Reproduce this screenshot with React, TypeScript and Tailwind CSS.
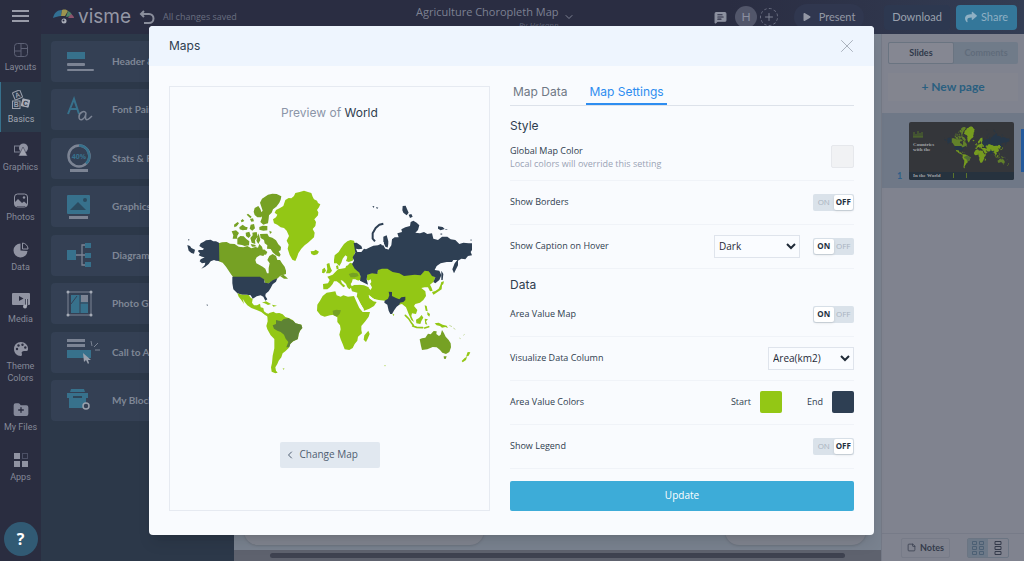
import { useState } from 'react'
import type { ReactNode } from 'react'
import {
  ChevronDown,
  ChevronLeft,
  Folder,
  MessageSquareText,
  Plus,
  StickyNote,
  X,
} from 'lucide-react'
import { FaPlay, FaShare } from 'react-icons/fa'

interface NavItem {
  label: string
  icon: ReactNode
  active?: boolean
  tall?: boolean
}

interface BlockItem {
  label: string
  icon: ReactNode
}

const navItems: NavItem[] = [
  {
    label: 'Layouts',
    icon: (
      <svg className="size-4" viewBox="0 0 16 16" fill="none" stroke="#5d6175">
        <rect x="1.5" y="1.5" width="13" height="13" rx="3" />
        <path d="M8 1.5v13M1.5 9H8M8 6.5h6.5" />
      </svg>
    ),
  },
  {
    label: 'Basics',
    active: true,
    icon: (
      <svg className="size-5" viewBox="0 0 20 20">
        <g fontFamily="Liberation Sans" fontSize="7" fontWeight="bold" textAnchor="middle">
          <g transform="rotate(-22 6.5 5)">
            <rect x="2.5" y="1" width="8" height="8" rx="1" fill="none" stroke="#9a9fac" />
            <text x="6.5" y="7.6" fill="#9a9fac">A</text>
          </g>
          <rect x="1.5" y="11" width="7.5" height="7.5" fill="none" stroke="#9a9fac" />
          <text x="5.2" y="17.4" fill="#9a9fac">B</text>
          <g transform="rotate(14 14.5 13)">
            <rect x="10.5" y="9" width="8" height="8" rx="1" fill="#a9adb8" />
            <text x="14.5" y="15.6" fill="#2c3849">C</text>
          </g>
        </g>
      </svg>
    ),
  },
  {
    label: 'Graphics',
    icon: (
      <svg className="size-4" viewBox="0 0 16 16">
        <rect x="1.5" y="4" width="7" height="6" fill="none" stroke="#7d8191" />
        <circle cx="10.5" cy="6" r="4.5" fill="#8f92a1" />
        <path d="M10 5l4.500 9H5.500z" fill="#a1a4b0" stroke="#2a2d40" strokeWidth=".5" />
      </svg>
    ),
  },
  {
    label: 'Photos',
    icon: (
      <svg className="size-4" viewBox="0 0 16 16">
        <rect x="1.500" y="2" width="13" height="13" rx="3" fill="none" stroke="#9093a2" />
        <path d="M2 10l3-3 4 4 2-1.500 3 2.500v2H2z" fill="#9093a2" />
        <circle cx="11" cy="5.500" r="1.200" fill="#9093a2" />
      </svg>
    ),
  },
  {
    label: 'Data',
    icon: (
      <svg className="size-4" viewBox="0 0 16 16">
        <path d="M7.500 1.500A7 7 0 1 0 14.500 9L7.500 8.500z" fill="#9093a2" />
        <path d="M9.500 1a6 6 0 0 1 5.500 6H9.500z" fill="none" stroke="#9093a2" />
      </svg>
    ),
  },
  {
    label: 'Media',
    icon: (
      <svg className="size-5" viewBox="0 0 20 20">
        <rect x="1" y="3" width="18" height="12" rx="1" fill="#9093a2" />
        <path d="M8 6v5l4.500-2.500z" fill="#2a2d40" />
        <path d="M15.500 9v7" stroke="#2a2d40" strokeWidth="3" />
        <path d="M15.500 9v7" stroke="#a6a9b5" strokeWidth="1.500" />
        <circle cx="14" cy="16.500" r="2" fill="#a6a9b5" />
      </svg>
    ),
  },
  {
    label: 'Theme Colors',
    tall: true,
    icon: (
      <svg className="size-4" viewBox="0 0 16 16">
        <path d="M8 1C3.800 1 1 4 1 8s3 7 6.500 7c2 0 1.500-2 1.200-3s.8-2 2.300-2h2.500C15 10 15 8.500 15 7.500 15 4 12 1 8 1z" fill="#9093a2" />
        <g fill="#2a2d40">
          <circle cx="4" cy="8" r="1.200" />
          <circle cx="5.500" cy="4.500" r="1.200" />
          <circle cx="9.500" cy="3.800" r="1.200" />
          <circle cx="12.300" cy="6.500" r="1.200" />
        </g>
      </svg>
    ),
  },
  {
    label: 'My Files',
    icon: (
      <span className="relative block size-4">
        <Folder className="size-4 fill-[#85899a] text-[#85899a]" />
        <Plus className="absolute top-1 left-1 size-2 text-[#2a2d40]" strokeWidth={4} />
      </span>
    ),
  },
  {
    label: 'Apps',
    icon: (
      <svg className="size-4" viewBox="0 0 16 16" fill="#9093a2">
        <rect x="1" y="1" width="6" height="6" />
        <rect x="1" y="9" width="6" height="6" />
        <rect x="9" y="9" width="6" height="6" />
        <rect x="9.500" y="1.500" width="5" height="5" fill="none" stroke="#4c5065" />
      </svg>
    ),
  },
]

const blockItems: BlockItem[] = [
  {
    label: 'Header & Text',
    icon: (
      <>
        <rect x="2" y="4" width="18" height="7" fill="#37718c" />
        <rect x="2" y="15" width="18" height="3" rx="1" fill="#7c8494" />
        <rect x="2" y="21" width="27" height="2" rx="1" fill="#7c8494" />
      </>
    ),
  },
  {
    label: 'Font Pairs',
    icon: (
      <>
        <path d="M3 18L9 3l5 15M5 13h7" fill="none" stroke="#37718c" strokeWidth="2" />
        <path d="M21 17c-1-3-7-1-7 4 0 5 6 3 7-4-1 6-1 10 6 3" fill="none" stroke="#7c8494" strokeWidth="1.500" />
      </>
    ),
  },
  {
    label: 'Stats & Figures',
    icon: (
      <>
        <circle cx="14" cy="12" r="10.500" fill="none" stroke="#7c8494" strokeWidth="2.500" />
        <path d="M14 1.500a10.500 10.500 0 0 1 7 18" fill="none" stroke="#37718c" strokeWidth="2.500" />
        <text x="14" y="14.500" fontSize="7" textAnchor="middle" fill="#37718c" fontFamily="Open Sans">40%</text>
        <rect x="5" y="25" width="18" height="3" fill="#7c8494" />
      </>
    ),
  },
  {
    label: 'Graphics',
    icon: (
      <>
        <rect x="2" y="2" width="23" height="19" rx="1" fill="#37718c" />
        <path d="M5 17l8-8 8 8z" fill="#2c4b60" />
        <circle cx="20" cy="7" r="2" fill="#2c4b60" />
        <rect x="4" y="23" width="19" height="3" fill="#7c8494" />
      </>
    ),
  },
  {
    label: 'Diagrams',
    icon: (
      <>
        <path d="M10 14h13M22 4h-5v20h5" fill="none" stroke="#7c8494" strokeWidth="1.300" />
        <g fill="#37718c">
          <rect x="2" y="9" width="9" height="10" />
          <rect x="20" y="2" width="6" height="5" />
          <rect x="20" y="12" width="6" height="5" />
          <rect x="20" y="21" width="6" height="5" />
        </g>
      </>
    ),
  },
  {
    label: 'Photo Grids',
    icon: (
      <>
        <rect x="3" y="2" width="23" height="23" fill="none" stroke="#7c8494" />
        <rect x="6" y="5" width="17" height="18" fill="#37718c" />
        <rect x="16" y="5" width="7" height="7" fill="#7c8494" />
        <path d="M15 5v18M6 14l6-8M15 13h8" stroke="#344054" />
        <g fill="#a5abb6">
          <circle cx="3" cy="2" r="1.500" />
          <circle cx="26" cy="2" r="1.500" />
          <circle cx="3" cy="25" r="1.500" />
          <circle cx="26" cy="25" r="1.500" />
        </g>
      </>
    ),
  },
  {
    label: 'Call to Action',
    icon: (
      <>
        <rect x="2" y="1" width="18" height="3" fill="#7c8494" />
        <rect x="2" y="6" width="18" height="3" fill="#7c8494" />
        <rect x="2" y="12" width="24" height="8" fill="#37718c" />
        <path d="M18 15l1 9 2-2 2 4 1-1-1-3h3z" fill="#9aa1ad" />
        <path d="M27 8l-1-5M29 9l4-4M30 12h5" stroke="#7c8494" />
      </>
    ),
  },
  {
    label: 'My Blocks',
    icon: (
      <>
        <path d="M6 3h13l1 3H5zM2 7h21v5H2zM4 12h17v10H4z" fill="#37718c" />
        <path d="M8 11h9" stroke="#2c3849" strokeWidth="1.500" />
        <circle cx="21" cy="20" r="3" fill="#344054" stroke="#9aa1ad" strokeWidth="1.500" />
      </>
    ),
  },
]

function WorldMap({ className, dark, sea }: { className: string; dark: string; sea: string }) {
  return (
    <svg className={className} viewBox="18 30 864 558" role="img" aria-label="World map">
      {/* Canada */}
      <g fill="#76a124">
        <path d="M116 190L126 187 140 186 150 191 164 192 176 200 190 202 202 198 214 205 226 201 234 203 238 192 246 200 250 214 256 220 250 228 240 226 230 232 226 240 229 250 240 256 248 260 256 266 261 280 266 280 266 264 269 250 262 240 268 228 278 222 288 228 292 240 300 240 306 250 314 260 318 272 318 282 300 288 294 294 284 300 276 304 266 310 256 310 252 300 240 292 160 292 154 284 146 272 138 260 128 248 116 244z" />
        <path d="M240 68L246 56 254 51 264 44 277 41 290 42 304 49 302 59 298 68 289 80 279 88 275 98 267 106 266 116 264 130 256 132 250 134 241 126 246 113 240 102 248 92 244 80zM224 84L235 78 241 87 245 98 243 112 232 112 224 105 221 95z" />
        <path d="M238 141L248 137 262 138 262 151 250 152 238 149zM240 162L262 161 267 170 277 173 288 181 295 193 303 201 302 211 296 214 302 224 298 230 288 226 278 217 272 207 261 206 262 196 254 190 252 180 242 174zM172 175L181 168 191 169 199 177 208 184 207 196 194 198 186 195 172 193zM155 154L168 151 177 159 172 167 171 176 158 176 160 166zM162 134L173 126 177 130 170 139 163 142zM178 142L188 134 196 140 203 142 201 149 188 151 179 148zM182 122L188 117 193 123 185 127zM200 104L204 101 215 110 211 115zM210 117L219 115 222 124 214 125zM212 134L222 132 225 145 217 152 209 146zM197 158L208 155 212 167 206 174 198 168zM217 158L230 156 233 170 225 181 226 192 215 188 211 174 218 166zM236 160L241 180 235 192 229 182zM244 213L252 208 262 216 258 224 247 222zM268 152L276 156 270 162zM212 192L224 194 230 199 216 200zM300 288L310 284 318 290 324 296 312 296z" />
      </g>
      {/* United States */}
      <g fill={dark}>
        <path d="M117 188L108 184 100 184 92 179 78 181 70 186 62 190 58 198 66 203 72 206 68 210 56 210 54 214 60 220 56 226 66 230 74 232 62 238 59 244 66 250 76 248 74 256 64 266 76 260 86 252 92 244 102 240 108 242 118 243zM22 195L30 198 34 204 45 209 42 221 34 219 26 212 24 204zM24 177L29 179 26 182zM157 290H240L252 298 254 308 266 310 278 301 292 295 288 305 278 313 272 324 266 334 257 341 256 348 262 358 256 362 250 350 242 346 230 349 218 356 212 346 200 344 186 344 172 340 160 328 157 310zM80 373L84 375 81 378z" />
      </g>
      {/* Americas */}
      <g fill="#93c715">
        <path d="M172 340L186 344 206 345 212 353 218 357 216 368 222 376 231 376 240 371 242 382 250 384 252 394 260 400 270 402 264 410 254 404 244 396 230 390 214 384 202 376 194 366 188 356 192 372 184 360 176 350zM246 368L258 364 273 372 264 375 254 370zM276 374L291 377 280 380z" />
        <path d="M262 408L268 399 280 395 288 400 298 399 308 403 316 411 326 414 338 420 346 430 364 434 367 444 360 452 356 462 354 476 340 484 330 492 326 504 316 514 308 520 304 532 296 542 292 552 286 562 288 572 293 578 286 580 275 575 273 562 276 549 278 527 283 505 283 477 272 466 262 448 259 438 263 424z" />
        <path d="M308 565L314 566 310 569z" />
        <path d="M316 60L326 54 334 55 342 48 346 39 359 36 372 32 384 36 394 39 398 50 402 58 411 62 414 69 421 73 417 82 411 90 415 97 414 106 403 118 408 126 406 138 398 147 404 158 402 172 393 180 384 188 374 196 364 206 355 220 351 232 346 243 337 239 329 225 323 206 326 194 320 182 327 168 320 152 312 144 302 142 292 134 282 130 279 118 288 112 292 104 284 98 288 90 300 84 310 78z" />
        <path d="M392 214L402 213 407 209 417 215 412 223 402 226 394 222z" />
      </g>
      <path d="M288 420L297 422 304 424 311 417 326 414 332 419 340 422 347 430 364 434 367 444 360 452 356 462 353 478 339 484 331 492 328 502 319 502 325 486 317 476 312 464 302 456 292 452 282 446 278 436 288 432z" fill="#5e8334" />
      <g transform="translate(420 0)">
        {/* Europe */}
        <g fill="#93c715">
          <path d="M42 240L44 226 56 216 62 206 72 192 82 184 92 180 102 182 106 196 106 214 102 230 98 242 86 246 76 242 82 230 76 226 68 236 64 248 58 258 50 250 42 250zM20 252L28 249 31 262 36 272 30 280 18 280 22 268zM7 268L14 263 18 272 12 280 6 278zM48 258L54 256 56 266 50 268z" />
          <path d="M9 312L24 310 29 300 22 290 38 284 46 276 54 268 64 266 76 264 80 254 92 248 100 252 106 266 120 278 124 298 114 302 106 298 98 298 96 306 92 312 96 320 88 328 82 322 78 312 68 302 62 300 66 310 76 318 70 322 58 310 50 304 42 304 38 312 30 322 22 328 10 328z" />
          {/* Asia */}
          <path d="M92 320L104 314 118 314 132 316 146 322 152 318 148 306 140 298 142 282 156 278 172 280 174 268 186 264 202 264 218 272 238 276 252 284 284 282 302 284 314 270 326 272 336 286 346 292 340 306 330 314 334 322 338 332 330 334 324 322 314 322 304 324 316 334 318 348 310 360 300 368 286 372 282 378 292 390 288 402 276 400 274 408 282 426 274 420 266 402 258 382 246 372 236 374 206 366 196 362 176 360 160 356 146 346 148 354 160 364 170 366 162 378 148 386 132 392 124 376 110 352 112 338 96 334z" />
        </g>
        {/* Africa, Madagascar and the Pacific islands */}
        <g fill="#93c715">
          <path d="M-9 392L-8 374 0 362 8 348 20 338 34 336 46 334 50 346 62 350 70 346 84 350 102 348 108 362 118 384 128 396 150 396 146 410 136 424 124 438 124 450 126 460 114 470 112 482 104 492 98 504 88 510 74 508 68 492 62 478 58 464 62 448 60 436 52 426 52 412 42 404 30 406 14 410 2 406zM133 466L145 452 149 462 143 476 138 486 131 479z" />
          <path d="M336 336L346 333 356 326 361 316 364 306 372 304 370 312 366 316 365 328 356 334 344 342 340 344zM288 419L297 414 305 405 310 413 304 423 301 432 289 430zM314 416L324 418 318 424 322 434 316 432zM344 430L356 428 368 434 380 437 384 444 376 441 366 443 360 438 350 436zM314 376L320 378 323 394 317 392zM322 396L330 402 328 410 322 404zM443 516L451 517 446 527 438 530zM434 534L441 530 438 540 428 547 425 543zM217 400L223 404 220 408z" />
          <path d="M256 406L266 416 275 430 280 436M278 438L290 442 308 443M314 444L326 440" fill="none" stroke="#93c715" strokeWidth="5" strokeLinecap="round" />
          <path d="M388 436L396 440M400 444L406 448M418 474L422 476M430 466L434 463" fill="none" stroke="#c7dba0" strokeWidth="3" />
          <path d="M193 557H197" stroke="#93c715" strokeWidth="2" />
        </g>
        <path d="M38 392L49 389 63 391 59 402 50 410 40 406zM86 282L98 278 112 280 116 288 104 292 92 292z" fill="#76a124" />
        {/* Australia */}
        <path d="M299 478L306 475 316 473 324 461 332 463 341 453 350 454 349 462 357 468 362 464 366 450 372 460 377 470 386 480 392 490 393 502 388 516 378 522 367 518 360 510 350 502 338 501 322 508 306 510 303 498zM371 529L380 529 377 537 372 536z" fill="#76a124" />
        {/* Russia and India */}
        <g fill={dark}>
          <path d="M101 189L110 188 124 198 127 206 116 208 108 206 112 216 124 216 132 206 138 208 150 202 160 197 174 196 182 192 190 196 196 206 206 208 214 196 216 178 224 172 236 172 232 160 246 156 244 148 256 142 270 138 272 126 280 122 290 128 298 136 294 150 286 158 300 160 312 156 322 162 336 160 340 176 354 180 366 170 382 170 392 178 406 180 418 192 430 188 446 190 456 190 456 210 452 216 456 226 444 228 436 238 424 236 414 242 414 256 408 268 402 280 397 268 404 250 412 240 400 240 396 246 380 246 362 250 350 258 344 270 358 272 364 286 358 300 346 310 340 306 346 292 336 288 326 274 314 272 302 286 284 284 252 288 238 280 218 276 202 266 186 266 174 270 172 282 156 280 142 284 140 298 144 314 132 308 120 302 122 290 118 278 104 266 96 252 102 242 98 232 106 218z" />
          <path d="M190 170L200 166 204 180 207 196 206 204 196 200 190 186zM248 78L257 77 261 87 266 98 260 106 250 98 247 91zM266 104L274 102 278 110 270 114zM157 78L163 79 161 84zM168 81L175 83 171 87zM354 139L368 141 374 147 362 151 354 146zM376 147L384 150 377 150zM362 160L368 162 362 165zM364 272L370 282 368 300 364 300zM452 178L456 180 452 183z" />
          <path d="M190 131L178 134 167 144 158 160 158 176 165 184" fill="none" stroke={dark} strokeWidth="6" strokeLinejoin="round" />
          <path d="M206 335L216 336 216 348 228 354 238 358 244 352 256 350 256 360 250 366 240 368 238 374 230 380 223 390 216 402 211 402 206 392 202 374 193 368 194 362 204 356 208 346z" />
        </g>
        {/* Inland seas */}
        <g fill={sea}>
          <path d="M144 302L152 298 154 306 150 312 156 322 152 330 146 324 148 314zM98 304L108 300 118 304 124 312 112 314 98 314z" />
          <path d="M106 352L112 352 122 372 132 388 128 394 118 376zM146 344L158 354 168 360 164 364 150 356zM82 232L76 248 88 250 84 256 70 260 66 254 72 240z" />
        </g>
        <path d="M190 186L186 196M208 186L204 208" stroke={sea} strokeWidth="4" />
      </g>
    </svg>
  )
}

function Toggle({ label, initial = false }: { label: string; initial?: boolean }) {
  const [on, setOn] = useState(initial)
  return (
    <label className="relative flex h-[17px] w-[41px] cursor-pointer items-center rounded-xs bg-[#dae2ea] p-px text-[8px] font-bold">
      <input
        type="checkbox"
        aria-label={label}
        checked={on}
        onChange={e => setOn(e.target.checked)}
        className="absolute inset-0 opacity-0"
      />
      <span className={`flex h-full flex-1 items-center justify-center rounded-xs ${on ? 'bg-white text-[#23303f] shadow-sm' : 'font-normal text-[#a9b3c0]'}`}>ON</span>
      <span className={`flex h-full flex-1 items-center justify-center rounded-xs ${on ? 'font-normal text-[#a9b3c0]' : 'bg-white text-[#23303f] shadow-sm'}`}>OFF</span>
    </label>
  )
}

function Row({ label, children }: { label: string; children: ReactNode }) {
  return (
    <div className="flex h-11 items-center justify-between border-b border-[#f0f3f8]">
      <span>{label}</span>
      {children}
    </div>
  )
}

function Select({ label, options }: { label: string; options: string[] }) {
  return (
    <select aria-label={label} className="h-[23px] w-[86px] border border-[#dfe4ec] bg-[#fafcff] text-[10px] text-[#1f2a37]">
      {options.map(option => (
        <option key={option}>{option}</option>
      ))}
    </select>
  )
}

function MapsDialog() {
  return (
    <div role="dialog" aria-label="Maps" className="w-[725px] overflow-hidden rounded-sm bg-[#f9fbfe] text-[9px] text-[#2f3d4e] shadow-lg">
      <div className="flex h-10 items-center justify-between bg-[#eef5fe] px-5">
        <h2 className="font-[Inter,sans-serif] text-xs">Maps</h2>
        <button aria-label="Close" className="-mr-1 text-[#a4acb8]">
          <X className="size-[22px]" strokeWidth={1} />
        </button>
      </div>

      <div className="flex gap-5 px-5 pt-5 pb-6">
        {/* Preview */}
        <div className="flex w-[321px] flex-col items-center border border-[#e6eaf1] pt-[18px]">
          <p className="font-[Inter,sans-serif] text-xs text-[#8b95a8]">
            Preview of <span className="text-[#2f3d4e]">World</span>
          </p>
          <WorldMap className="mt-[69px] h-[186px] w-[288px]" dark="#2e3f53" sea="#f9fbfe" />
          <button className="mt-[66px] flex h-[26px] w-[100px] items-center gap-1 rounded-xs bg-[#e1e8f0] px-1 text-[10px] text-[#4f5d70]">
            <ChevronLeft className="size-3" />
            Change Map
          </button>
        </div>

        {/* Settings */}
        <div className="flex-1">
          <div className="flex h-5 gap-4 border-b border-[#dde2ea] font-[Inter,sans-serif] text-xs leading-3">
            <button className="px-[3px] pb-2 text-[#6f7885]">Map Data</button>
            <button className="border-b-2 border-[#2e8df0] px-[3px] pb-[6px] text-[#2e8df0]">Map Settings</button>
          </div>

          <h3 className="mt-1 pt-2 font-[Inter,sans-serif] text-xs leading-4">Style</h3>
          <div className="flex h-[47px] items-center justify-between border-b border-[#f0f3f8]">
            <div className="leading-[13px]">
              <p>Global Map Color</p>
              <p className="text-[#9aa3b5]">Local colors will override this setting</p>
            </div>
            <button aria-label="Global Map Color" className="size-[23px] rounded-xs border border-[#e6e8ec] bg-[#f1f2f4]" />
          </div>
          <Row label="Show Borders">
            <Toggle label="Show Borders" />
          </Row>
          <Row label="Show Caption on Hover">
            <div className="flex items-center gap-[13px]">
              <Select label="Caption theme" options={['Dark', 'Light']} />
              <Toggle label="Show Caption on Hover" initial />
            </div>
          </Row>

          <h3 className="pt-2 font-[Inter,sans-serif] text-xs leading-4">Data</h3>
          <Row label="Area Value Map">
            <Toggle label="Area Value Map" initial />
          </Row>
          <Row label="Visualize Data Column">
            <Select label="Visualize Data Column" options={['Area(km2)', 'Population']} />
          </Row>
          <Row label="Area Value Colors">
            <div className="flex items-center gap-[9px]">
              <span>Start</span>
              <button aria-label="Start color" className="size-[22px] rounded-xs bg-[#93c715]" />
              <span className="ml-4">End</span>
              <button aria-label="End color" className="size-[22px] rounded-xs bg-[#2e3f53]" />
            </div>
          </Row>
          <Row label="Show Legend">
            <Toggle label="Show Legend" />
          </Row>
          <button className="mt-3 h-[30px] w-full rounded-xs bg-[#3dacd8] text-[10px] text-white">Update</button>
        </div>
      </div>
    </div>
  )
}

function Sidebar() {
  return (
    <nav className="flex w-[41px] shrink-0 flex-col bg-[#2a2d40]">
      <button aria-label="Menu" className="flex h-8 items-center justify-center">
        <svg className="h-3 w-[17px]" viewBox="0 0 17 12" fill="#989ba8">
          <path d="M0 0h17v2H0zM0 5h17v2H0zM0 10h17v2H0z" />
        </svg>
      </button>
      {navItems.map(item => (
        <button
          key={item.label}
          className={`flex flex-col items-center justify-center gap-[3px] font-[Roboto,sans-serif] text-[9px] leading-3 text-[#858998] ${item.tall ? 'h-[60px]' : 'h-[50px]'} ${item.active ? 'border-l border-[#37718c] bg-[#2c3a4b] text-[#a2a7b2]' : ''}`}
        >
          {item.icon}
          <span>{item.label}</span>
        </button>
      ))}
      <button aria-label="Help" className="mt-auto mb-[5px] flex size-[34px] items-center justify-center self-center rounded-full bg-[#315a74] text-base font-bold text-white">
        ?
      </button>
    </nav>
  )
}

function Header() {
  return (
    <header className="flex h-[34px] items-center bg-linear-to-r from-[#2a2d42] from-70% to-[#333d54] pr-[7px] text-[10px] text-[#7d8192]">
      <div className="flex w-[375px] items-center pl-3">
        <svg className="h-4 w-[22px]" viewBox="0 0 22 16">
          <path d="M0 9C1 4 4 1 9 1L8 7C5 7 3 8 0 9z" fill="#326f93" />
          <path d="M9 1c3-1 5 0 6 1l-3 5-4 0z" fill="#9c944f" />
          <path d="M15 2c3 1 4 3 4 5l-6 1z" fill="#4d8367" />
          <path d="M18 5c2 1 3 3 3 4l-6 0z" fill="#8d526c" />
          <circle cx="11" cy="12" r="2.500" fill="#a9acb7" />
          <circle cx="10.500" cy="11.500" r="1" fill="#2a2d42" />
        </svg>
        <span className="ml-[3px] font-[Inter,sans-serif] text-[19px] leading-6 text-[#9497a5]">visme</span>
        <button aria-label="Undo" className="ml-2">
          <svg className="h-[15px] w-4" viewBox="0 0 16 15" fill="none" stroke="#8a8e9c" strokeWidth="2">
            <path d="M5 1L2 4l3 3M2 4h8a4 4 0 0 1 0 9H5" />
          </svg>
        </button>
        <span className="ml-2 text-[9px] text-[#696d80]">All changes saved</span>
      </div>

      <div className="flex items-center gap-1">
        <div className="text-right">
          <p className="text-[11px] leading-[15px]">Agriculture Choropleth Map</p>
          <p className="text-[8px] leading-[11px] text-[#5f6376] italic">By Heleann</p>
        </div>
        <ChevronDown className="size-3" />
      </div>

      <div className="ml-auto flex items-center font-[Lato,sans-serif] text-[11px]">
        <button aria-label="Feedback">
          <MessageSquareText className="size-[13px] fill-[#8d91a0] text-[#8d91a0] [&_path:not(:first-child)]:stroke-[#2a2d42]" />
        </button>
        <span className="ml-2 flex size-[22px] items-center justify-center rounded-full bg-[#52566a] text-xs text-[#8b8fa0]">H</span>
        <button aria-label="Invite" className="ml-[3px] flex size-[18px] items-center justify-center rounded-full border border-dashed border-[#6d7184]">
          <Plus className="size-3" />
        </button>
        <button className="ml-4 flex h-[26px] w-[70px] items-center justify-center gap-2 rounded-full bg-[#30374f] text-[#9397a4]">
          <FaPlay className="size-2" />
          Present
        </button>
        <button className="ml-5 h-[25px] w-[66px] rounded-sm bg-[#2d3850] text-[#9aa1ae]">Download</button>
        <button className="ml-[6px] flex h-[25px] w-[61px] items-center justify-center gap-1 rounded-sm bg-[#34779a] text-[#8fb0c4]">
          <FaShare className="size-3" />
          Share
        </button>
      </div>
    </header>
  )
}

function SlidesPanel() {
  return (
    <aside className="flex w-[143px] shrink-0 flex-col border-l border-[#747986] bg-[#80838f] font-[Lato,sans-serif] text-[11px]">
      <div className="mx-[6px] mt-2 flex h-[22px] rounded-xs bg-[#707b89]">
        <button className="flex-1 rounded-xs border border-[#6a7481] bg-[#858792] text-[9px] font-bold text-[#2f394a]">Slides</button>
        <button className="flex-1 text-[9px] font-bold text-[#606c7b]">Comments</button>
      </div>
      <button className="mx-[6px] mt-[9px] h-7 bg-[#83858f] text-xs font-bold text-[#2a5f80]">+ New page</button>
      <div className="mt-3 flex h-[75px] items-center justify-between bg-[#6f7887] pl-[15px]">
        <span className="self-end pb-[6px] text-[9px] font-bold text-[#2f5f87]">1</span>
        <div className="flex h-[58px] w-[105px] flex-col overflow-hidden rounded-xs bg-[#34363a] font-['Liberation_Serif',serif] text-[5px] leading-[5px] font-bold text-[#a3a5a8]">
          <div className="flex flex-1 justify-between px-1 pt-1">
            <div>
              <svg className="mt-1 mb-1 h-2 w-[10px]" viewBox="0 0 10 8" fill="none" stroke="#53712b">
                <path d="M1 7V2M3 7V4M5 7V1M7 7V3M9 7V2M0 7h10" />
              </svg>
              <p>Countries<br />with the</p>
            </div>
            <WorldMap className="h-[43px] w-[66px] opacity-70" dark="#21374d" sea="#34363a" />
          </div>
          <div className="flex h-2 items-center gap-3 bg-[#26323e] px-1">
            <span>In the World</span>
            <span className="h-[5px] w-px bg-[#5c742b]" />
            <span className="h-[5px] w-px bg-[#5c742b]" />
          </div>
        </div>
        <span className="h-[43px] w-[3px] bg-[#245a9c]" />
      </div>
      <div className="mt-auto flex h-7 items-center justify-between border-t border-[#777b88] pr-[15px] pl-[19px]">
        <button className="flex h-5 w-[49px] items-center justify-center gap-1 rounded-xs border border-[#777b88] text-[9px] font-bold text-[#343b4b]">
          <StickyNote className="size-[9px]" />
          Notes
        </button>
        <div className="flex h-5 rounded-xs border border-[#6b7583]">
          <button aria-label="Grid view" className="flex w-5 items-center justify-center bg-[#6d7988]">
            <svg className="h-4 w-3" viewBox="0 0 12 16" fill="none" stroke="#4d6074">
              <path d="M.5 1.500h4v3h-4zM.5 6.500h4v3h-4zM.5 11.500h4v3h-4zM7.500 1.500h4v3h-4zM7.500 6.500h4v3h-4zM7.500 11.500h4v3h-4z" />
            </svg>
          </button>
          <button aria-label="List view" className="flex w-5 items-center justify-center">
            <svg className="h-4 w-2" viewBox="0 0 8 16" fill="none" stroke="#343b4b">
              <path d="M1 1.500h6v3H1zM1 6.500h6v3H1zM1 11.500h6v3H1z" />
            </svg>
          </button>
        </div>
      </div>
    </aside>
  )
}

export default function App() {
  return (
    <div className="relative flex h-screen overflow-hidden bg-[#2c3849] font-['Open_Sans',sans-serif]">
      <Sidebar />
      <div className="flex min-w-0 flex-1 flex-col">
        <Header />
        <div className="flex min-h-0 flex-1">
          {/* Blocks */}
          <div className="w-[193px] shrink-0 pt-[7px] pl-[10px]">
            <div className="flex h-[380px] flex-col justify-between">
              {blockItems.map(item => (
                <button key={item.label} className="flex h-[41px] items-center overflow-hidden rounded-sm bg-[#344054] pl-[14px] font-[Lato,sans-serif] text-[10px] font-bold whitespace-nowrap text-[#7f8796]">
                  <svg className="h-7 w-9 shrink-0" viewBox="0 0 36 28">{item.icon}</svg>
                  <span className="ml-[11px]">{item.label}</span>
                </button>
              ))}
            </div>
          </div>

          {/* Canvas */}
          <main className="flex min-w-0 flex-1 flex-col justify-end bg-[#79828f]">
            <div className="mb-[5px] flex justify-between pr-[15px] pl-[10px]">
              <div className="h-7 w-[240px] rounded-full bg-[#80848f] shadow-sm" />
              <div className="h-7 w-[141px] rounded-full bg-[#80848f] shadow-sm" />
            </div>
            <div className="flex h-[11px] items-center bg-[#5e626e] pr-9 pl-9">
              <div className="h-[5px] flex-1 rounded-full bg-[#3e4250]" />
            </div>
          </main>

          <SlidesPanel />
        </div>
      </div>

      <div className="absolute inset-0 flex items-center justify-center pr-px pb-px">
        <MapsDialog />
      </div>
    </div>
  )
}
